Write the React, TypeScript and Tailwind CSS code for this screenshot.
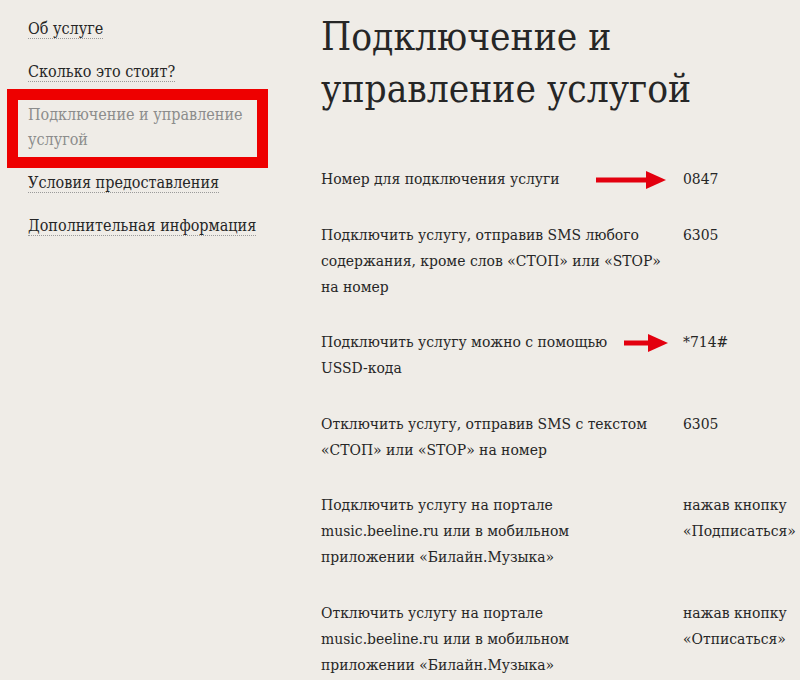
import React from 'react';

const navItems = [
  { label: 'Об услуге', active: false },
  { label: 'Сколько это стоит?', active: false },
  { label: 'Подключение и управление услугой', active: true },
  { label: 'Условия предоставления', active: false },
  { label: 'Дополнительная информация', active: false },
];

interface Row {
  text: string[];
  value: string[];
  arrow?: 'long' | 'short';
}

const rows: Row[] = [
  { text: ['Номер для подключения услуги'], value: ['0847'], arrow: 'long' },
  {
    text: ['Подключить услугу, отправив SMS любого', 'содержания, кроме слов «СТОП» или «STOP»', 'на номер'],
    value: ['6305'],
  },
  { text: ['Подключить услугу можно с помощью', 'USSD-кода'], value: ['*714#'], arrow: 'short' },
  { text: ['Отключить услугу, отправив SMS с текстом', '«СТОП» или «STOP» на номер'], value: ['6305'] },
  {
    text: ['Подключить услугу на портале', 'music.beeline.ru или в мобильном', 'приложении «Билайн.Музыка»'],
    value: ['нажав кнопку', '«Подписаться»'],
  },
  {
    text: ['Отключить услугу на портале', 'music.beeline.ru или в мобильном', 'приложении «Билайн.Музыка»'],
    value: ['нажав кнопку', '«Отписаться»'],
  },
];

const Arrow: React.FC<{ kind: 'long' | 'short' }> = ({ kind }) => {
  const w = kind === 'long' ? 70 : 44;
  return (
    <svg
      width={w}
      height={20}
      viewBox={`0 0 ${w} 20`}
      className={kind === 'long' ? 'absolute left-[275px] top-[4px]' : 'absolute left-[303px] top-[4px]'}
    >
      <rect x={0} y={7.5} width={w - 18} height={5} fill="#e3000f" />
      <polygon points={`${w - 20},1 ${w},10 ${w - 20},19`} fill="#e3000f" />
    </svg>
  );
};

export default function App() {
  return (
    <div
      className="w-[800px] h-[680px] overflow-hidden bg-[#efece7] text-[#262626] flex"
      style={{ fontFamily: '"DejaVu Serif Condensed", "DejaVu Serif", serif' }}
    >
      <nav className="w-[321px] shrink-0 pl-[28px] pt-[16px] flex flex-col gap-[18px] text-[16px] leading-[25px]">
        {navItems.map((item) =>
          item.active ? (
            <div key={item.label} className="relative w-[232px] text-[#8c8c8c]">
              <div className="absolute -left-[21px] -top-[13px] w-[261px] h-[79px] border-[11px] border-[#ee0000]" />
              {item.label}
            </div>
          ) : (
            <div key={item.label}>
              <span className="border-b border-dotted border-[#9a9a9a]">{item.label}</span>
            </div>
          )
        )}
      </nav>

      <main className="flex-1 pt-[11px]">
        <h1 className="text-[38.5px] leading-[52px] font-normal mb-[51px]">
          Подключение и
          <br />
          управление услугой
        </h1>
        <div className="flex flex-col gap-[29.5px] text-[15.5px] leading-[26px]">
          {rows.map((row, i) => (
            <div key={i} className="flex relative">
              <div className="w-[362px] shrink-0">
                {row.text.map((t) => (
                  <div key={t}>{t}</div>
                ))}
              </div>
              <div className="whitespace-nowrap">
                {row.value.map((v) => (
                  <div key={v}>{v}</div>
                ))}
              </div>
              {row.arrow && <Arrow kind={row.arrow} />}
            </div>
          ))}
        </div>
      </main>
    </div>
  );
}
